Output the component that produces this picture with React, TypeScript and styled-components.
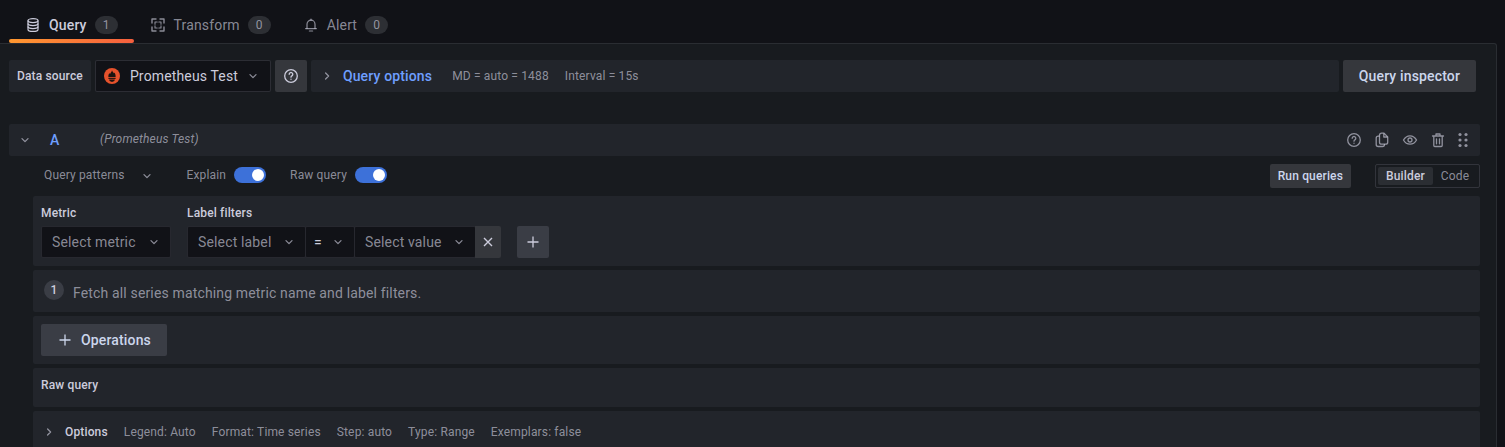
import styled, { createGlobalStyle } from 'styled-components';

const GlobalStyle = createGlobalStyle`
  html, body {
    margin: 0;
    padding: 0;
    height: 447px;
    overflow: hidden;
    background: #111217;
    font-family: Roboto, "Liberation Sans", sans-serif;
    letter-spacing: 0.15px;
    color: #ccccdc;
  }
  * {
    box-sizing: border-box;
  }
`;

const Chevron = ({ dir = 'down', size = 12 }: { dir?: 'down' | 'right'; size?: number }) => (
  <svg width={size} height={size} viewBox="0 0 12 12" fill="none" stroke="currentColor" strokeWidth="1.3" strokeLinecap="round" strokeLinejoin="round">
    {dir === 'down' ? <path d="M3 4.6 6 7.6 9 4.6" /> : <path d="M4.6 3 7.6 6 4.6 9" />}
  </svg>
);

const HelpIcon = () => (
  <svg width="16" height="16" viewBox="0 0 16 16" fill="none" stroke="currentColor" strokeWidth="1.3" strokeLinecap="round">
    <circle cx="8" cy="8" r="6.3" />
    <path d="M6.2 6.3a1.8 1.8 0 1 1 2.7 1.6c-.6.35-.9.7-.9 1.3" />
    <path d="M8 11.2v.1" />
  </svg>
);

const DatabaseIcon = () => (
  <svg width="16" height="16" viewBox="0 0 16 16" fill="none" stroke="currentColor" strokeWidth="1.2">
    <ellipse cx="8" cy="3.6" rx="5" ry="2" />
    <path d="M3 3.6v8.8c0 1.1 2.2 2 5 2s5-.9 5-2V3.6" />
    <path d="M3 6.6c0 1.1 2.2 2 5 2s5-.9 5-2M3 9.6c0 1.1 2.2 2 5 2s5-.9 5-2" />
  </svg>
);

const TransformIcon = () => (
  <svg width="16" height="16" viewBox="0 0 16 16" fill="none" stroke="currentColor" strokeWidth="1.4" strokeLinecap="round" strokeLinejoin="round">
    <path d="M2 6V2h4M10 2h4v4M14 10v4h-4M6 14H2v-4" />
    <path d="M5 7.200V5h2.200M8.800 5H11v2.200M11 8.800V11H8.800M7.200 11H5V8.800" strokeWidth="1.100" />
  </svg>
);

const BellIcon = () => (
  <svg width="16" height="16" viewBox="0 0 16 16" fill="none" stroke="currentColor" strokeWidth="1.2" strokeLinecap="round" strokeLinejoin="round">
    <path d="M4 11.400V7.200a4 4 0 0 1 8 0v4.200" />
    <path d="M2.600 11.600h10.800M6.400 14h3.200M8 2v1.200" />
  </svg>
);

const PrometheusLogo = () => (
  <svg width="16" height="16" viewBox="0 0 16 16">
    <circle cx="8" cy="8" r="8" fill="#e6522c" />
    <path d="M8 2.200c.3 1.500 1.600 2 2 3.200.2-.3.300-.6.300-1 1 1 1.500 2.500 1.300 4.600H4.400c-.2-1.800.4-3 1.300-3.900 0 .4.100.8.300 1.100C6.300 4.700 7.800 3.900 8 2.200Z" fill="#1a1410" />
    <path d="M4.400 9.800h7.200v1.100H4.400z" fill="#1a1410" />
    <path d="M5.200 11.600h5.600c0 1.300-1.200 2.300-2.800 2.300s-2.800-1-2.800-2.300Z" fill="#1a1410" />
  </svg>
);

const CopyIcon = () => (
  <svg width="16" height="16" viewBox="0 0 16 16" fill="none" stroke="currentColor" strokeWidth="1.3" strokeLinejoin="round">
    <path d="M5.500 3.200a2 2 0 0 1 2-2H10l3.700 3.700v5.300a2 2 0 0 1-2 2H7.500a2 2 0 0 1-2-2Z" />
    <path d="M9.800 1.400v3.600h3.700" />
    <path d="M5.500 4.200H4.200a2 2 0 0 0-2 2v6.300a2 2 0 0 0 2 2h4.300a2 2 0 0 0 2-2V12" />
  </svg>
);

const EyeIcon = () => (
  <svg width="16" height="16" viewBox="0 0 16 16" fill="none" stroke="currentColor" strokeWidth="1.3">
    <path d="M1.500 8C3 5.300 5.300 3.800 8 3.800S13 5.300 14.500 8C13 10.700 10.700 12.200 8 12.200S3 10.700 1.500 8Z" />
    <circle cx="8" cy="8" r="2" />
  </svg>
);

const TrashIcon = () => (
  <svg width="16" height="16" viewBox="0 0 16 16" fill="none" stroke="currentColor" strokeWidth="1.3" strokeLinecap="round" strokeLinejoin="round">
    <path d="M2.500 4h11M6 4V2h4v2M3.800 4v9.500a1 1 0 0 0 1 1h6.400a1 1 0 0 0 1-1V4M6.500 6.800v5M9.500 6.800v5" />
  </svg>
);

const DragIcon = () => (
  <svg width="16" height="16" viewBox="0 0 16 16" fill="currentColor">
    {[5, 11].map((x) => [2.500, 8, 13.500].map((y) => <circle key={`${x}-${y}`} cx={x} cy={y} r="1.600" />))}
  </svg>
);

const PlusIcon = ({ size = 16 }: { size?: number }) => (
  <svg width={size} height={size} viewBox="0 0 16 16" fill="none" stroke="currentColor" strokeWidth="1.300">
    <path d="M8 2.500v11M2.500 8h11" />
  </svg>
);

const CloseIcon = () => (
  <svg width="14" height="14" viewBox="0 0 14 14" fill="none" stroke="currentColor" strokeWidth="1.400">
    <path d="M3 3l8 8M11 3l-8 8" />
  </svg>
);

const Page = styled.div`
  height: 447px;
  overflow: hidden;
`;

const TabBar = styled.div`
  display: flex;
  height: 43px;
  padding-left: 9px;
`;

const Tab = styled.div<{ $active?: boolean }>`
  display: flex;
  align-items: center;
  gap: 8px;
  height: 43px;
  padding: 7px 16px 0;
  font-size: 14px;
  font-weight: ${(p) => (p.$active ? 500 : 400)};
  color: ${(p) => (p.$active ? '#ccccdc' : 'rgba(204, 204, 220, 0.65)')};
  position: relative;
  ${(p) =>
    p.$active &&
    `&::after {
      content: '';
      position: absolute;
      left: 0;
      right: 0;
      bottom: 0;
      height: 4px;
      border-radius: 2px;
      background: linear-gradient(90deg, #ff9830, #f55f3e);
    }`}
`;

const TabIcon = styled.span`
  display: flex;
`;

const Counter = styled.span`
  display: inline-flex;
  align-items: center;
  justify-content: center;
  width: 23px;
  height: 18px;
  border-radius: 9px;
  background: #2d2f34;
  font-size: 12px;
  font-weight: 400;
  color: rgba(204, 204, 220, 0.65);
`;

const Panel = styled.div`
  width: 1497px;
  height: 404px;
  background: #181b1f;
  border-top: 1px solid rgba(204, 204, 220, 0.1);
  border-right: 1px solid rgba(204, 204, 220, 0.1);
  border-top-right-radius: 3px;
  padding: 16px 0 0 9px;
`;

const SourceRow = styled.div`
  display: flex;
  gap: 4px;
  width: 1467px;
  height: 32px;
`;

const FieldLabel = styled.div`
  display: flex;
  align-items: center;
  padding: 0 8px;
  background: #22252b;
  border-radius: 2px;
  font-size: 12px;
  font-weight: 500;
  color: #ccccdc;
`;

const SourceSelect = styled.div`
  display: flex;
  align-items: center;
  width: 176px;
  padding: 0 8px;
  background: #111217;
  border: 1px solid rgba(204, 204, 220, 0.15);
  border-radius: 2px;
  font-size: 14px;
  color: #ccccdc;
  svg:last-child {
    margin-left: 9px;
    color: rgba(204, 204, 220, 0.65);
  }
`;

const SourceName = styled.span`
  margin-left: 10px;
`;

const SquareButton = styled.div`
  display: flex;
  align-items: center;
  justify-content: center;
  width: 32px;
  background: #35373c;
  border-radius: 2px;
  color: #ccccdc;
`;

const OptionsBar = styled.div`
  flex: 1;
  display: flex;
  align-items: center;
  padding-left: 10px;
  background: #22252b;
  border-radius: 2px;
  color: rgba(204, 204, 220, 0.65);
`;

const OptionsTitle = styled.span`
  margin-left: 10px;
  font-size: 14px;
  font-weight: 500;
  color: #6e9fff;
`;

const OptionsInfo = styled.span`
  margin-left: 20px;
  font-size: 12px;
  color: rgba(204, 204, 220, 0.65);
  & + & {
    margin-left: 16px;
  }
`;

const InspectorButton = styled.div`
  display: flex;
  align-items: center;
  padding: 0 16px;
  background: #35373c;
  border-radius: 2px;
  font-size: 14px;
  font-weight: 500;
  color: #ccd6ec;
`;

const QueryHeader = styled.div`
  display: flex;
  align-items: center;
  width: 1471px;
  height: 32px;
  margin-top: 32px;
  padding: 0 9px 0 10px;
  background: #22252b;
  border-radius: 2px;
  color: rgba(204, 204, 220, 0.65);
`;

const QueryLetter = styled.span`
  width: 50px;
  margin-left: 19px;
  font-size: 14px;
  font-weight: 500;
  color: #6e9fff;
`;

const QuerySource = styled.span`
  flex: 1;
  padding-bottom: 2px;
  font-size: 12px;
  font-style: italic;
  color: rgba(204, 204, 220, 0.65);
`;

const HeaderIcons = styled.div`
  display: flex;
  gap: 12px;
`;

const DragHandle = styled.span`
  display: flex;
  margin-left: -3px;
`;

const Body = styled.div`
  width: 1447px;
  margin-left: 24px;
`;

const Toolbar = styled.div`
  display: flex;
  align-items: center;
  height: 40px;
  padding-left: 11px;
  font-size: 12px;
  color: rgba(204, 204, 220, 0.65);
`;

const ToolbarGroup = styled.div`
  display: flex;
  align-items: center;
  padding-bottom: 3px;
`;

const ToolbarChevron = styled.span`
  display: flex;
  margin: 3px 34px 0 16px;
`;

const SwitchLabel = styled.span`
  margin-right: 8px;
`;

const Switch = styled.span`
  display: inline-flex;
  justify-content: flex-end;
  align-items: center;
  width: 32px;
  height: 16px;
  margin-right: 24px;
  padding-right: 2px;
  border-radius: 8px;
  background: #3d71d9;
  &::after {
    content: '';
    width: 12px;
    height: 12px;
    border-radius: 50%;
    background: #fff;
  }
`;

const ToolbarSpacer = styled.div`
  flex: 1;
`;

const RunButton = styled.div`
  display: flex;
  align-items: center;
  height: 24px;
  padding: 0 8px;
  background: #35373c;
  border-radius: 2px;
  font-size: 12px;
  font-weight: 500;
  color: #ccd6ec;
`;

const ModeSwitch = styled.div`
  display: flex;
  align-items: center;
  width: 105px;
  height: 24px;
  margin-left: 24px;
  padding: 2px;
  border: 1px solid rgba(204, 204, 220, 0.15);
  border-radius: 2px;
`;

const ModeItem = styled.span<{ $active?: boolean }>`
  display: flex;
  align-items: center;
  height: 100%;
  padding: 0 8px;
  border-radius: 2px;
  font-size: 12px;
  font-weight: ${(p) => (p.$active ? 500 : 400)};
  background: ${(p) => (p.$active ? '#2b2e33' : 'transparent')};
  color: ${(p) => (p.$active ? '#ccccdc' : 'rgba(204, 204, 220, 0.65)')};
`;

const Sections = styled.div`
  display: flex;
  flex-direction: column;
  gap: 4px;
`;

const Section = styled.div<{ $height: number }>`
  height: ${(p) => p.$height}px;
  padding: 8px;
  background: #22252b;
  border-radius: 2px;
`;

const Filters = styled.div`
  display: flex;
  gap: 17px;
`;

const FilterColumn = styled.div`
  display: flex;
  flex-direction: column;
`;

const FilterTitle = styled.div`
  height: 22px;
  padding-top: 1px;
  font-size: 12px;
  font-weight: 500;
  line-height: 17px;
  color: #ccccdc;
`;

const SelectGroup = styled.div`
  display: flex;
`;

const SelectBox = styled.div<{ $width: number }>`
  display: flex;
  align-items: center;
  justify-content: space-between;
  width: ${(p) => p.$width}px;
  height: 32px;
  margin-right: -1px;
  padding: 0 10px 0 10px;
  background: #111217;
  border: 1px solid rgba(204, 204, 220, 0.12);
  border-radius: 2px;
  font-size: 14px;
  color: rgba(204, 204, 220, 0.65);
`;

const OperatorText = styled.span`
  margin-left: -2px;
  color: #ccccdc;
  font-size: 14px;
`;

const RemoveButton = styled.div`
  display: flex;
  align-items: center;
  justify-content: center;
  width: 26px;
  height: 32px;
  background: #35373c;
  border-radius: 0 2px 2px 0;
  color: #ccccdc;
`;

const AddButton = styled(SquareButton)`
  height: 32px;
  margin-left: 16px;
  background: #3a3d45;
`;

const StepRow = styled.div`
  display: flex;
  align-items: center;
  height: 30px;
  margin-left: 3px;
  font-size: 14px;
  color: rgba(204, 204, 220, 0.65);
`;

const StepBadge = styled.span`
  display: inline-flex;
  align-items: center;
  justify-content: center;
  width: 20px;
  height: 20px;
  margin: -6px 9px 0 0;
  border-radius: 50%;
  background: #3a3d45;
  font-size: 12px;
  font-weight: 500;
  color: #ccccdc;
`;

const OperationsButton = styled.div`
  display: inline-flex;
  align-items: center;
  height: 32px;
  padding: 0 16px;
  gap: 8px;
  background: #3a3d45;
  border-radius: 2px;
  font-size: 14px;
  font-weight: 500;
  color: #ccd6ec;
`;

const RawTitle = styled.div`
  padding-top: 1px;
  font-size: 12px;
  font-weight: 500;
  line-height: 17px;
  color: #ccccdc;
`;

const OptionsRow = styled.div`
  display: flex;
  align-items: center;
  height: 26px;
  margin-left: 2px;
  font-size: 12px;
  color: rgba(204, 204, 220, 0.65);
`;

const OptionsLabel = styled.span`
  margin: 0 16px 0 10px;
  font-weight: 500;
  color: #ccccdc;
`;

const OptionItem = styled.span`
  margin-right: 16px;
`;

export default function App() {
  return (
    <Page>
      <GlobalStyle />
      <TabBar>
        <Tab $active>
          <TabIcon><DatabaseIcon /></TabIcon>
          Query
          <Counter>1</Counter>
        </Tab>
        <Tab>
          <TabIcon><TransformIcon /></TabIcon>
          Transform
          <Counter>0</Counter>
        </Tab>
        <Tab>
          <TabIcon><BellIcon /></TabIcon>
          Alert
          <Counter>0</Counter>
        </Tab>
      </TabBar>
      <Panel>
        <SourceRow>
          <FieldLabel>Data source</FieldLabel>
          <SourceSelect>
            <PrometheusLogo />
            <SourceName>Prometheus Test</SourceName>
            <Chevron />
          </SourceSelect>
          <SquareButton><HelpIcon /></SquareButton>
          <OptionsBar>
            <Chevron dir="right" />
            <OptionsTitle>Query options</OptionsTitle>
            <OptionsInfo>MD = auto = 1488</OptionsInfo>
            <OptionsInfo>Interval = 15s</OptionsInfo>
          </OptionsBar>
          <InspectorButton>Query inspector</InspectorButton>
        </SourceRow>
        <QueryHeader>
          <Chevron />
          <QueryLetter>A</QueryLetter>
          <QuerySource>(Prometheus Test)</QuerySource>
          <HeaderIcons>
            <HelpIcon />
            <CopyIcon />
            <EyeIcon />
            <TrashIcon />
            <DragHandle><DragIcon /></DragHandle>
          </HeaderIcons>
        </QueryHeader>
        <Body>
          <Toolbar>
            <ToolbarGroup>
              Query patterns
              <ToolbarChevron><Chevron /></ToolbarChevron>
              <SwitchLabel>Explain</SwitchLabel>
              <Switch />
              <SwitchLabel>Raw query</SwitchLabel>
              <Switch />
            </ToolbarGroup>
            <ToolbarSpacer />
            <RunButton>Run queries</RunButton>
            <ModeSwitch>
              <ModeItem $active>Builder</ModeItem>
              <ModeItem>Code</ModeItem>
            </ModeSwitch>
          </Toolbar>
          <Sections>
            <Section $height={70}>
              <Filters>
                <FilterColumn>
                  <FilterTitle>Metric</FilterTitle>
                  <SelectGroup>
                    <SelectBox $width={130}>Select metric<Chevron /></SelectBox>
                  </SelectGroup>
                </FilterColumn>
                <FilterColumn>
                  <FilterTitle>Label filters</FilterTitle>
                  <SelectGroup>
                    <SelectBox $width={119}>Select label<Chevron /></SelectBox>
                    <SelectBox $width={50}><OperatorText>=</OperatorText><Chevron /></SelectBox>
                    <SelectBox $width={122}>Select value<Chevron /></SelectBox>
                    <RemoveButton><CloseIcon /></RemoveButton>
                    <AddButton><PlusIcon /></AddButton>
                  </SelectGroup>
                </FilterColumn>
              </Filters>
            </Section>
            <Section $height={42}>
              <StepRow>
                <StepBadge>1</StepBadge>
                Fetch all series matching metric name and label filters.
              </StepRow>
            </Section>
            <Section $height={48}>
              <OperationsButton>
                <PlusIcon />
                Operations
              </OperationsButton>
            </Section>
            <Section $height={39}>
              <RawTitle>Raw query</RawTitle>
            </Section>
            <Section $height={40}>
              <OptionsRow>
                <Chevron dir="right" />
                <OptionsLabel>Options</OptionsLabel>
                <OptionItem>Legend: Auto</OptionItem>
                <OptionItem>Format: Time series</OptionItem>
                <OptionItem>Step: auto</OptionItem>
                <OptionItem>Type: Range</OptionItem>
                <OptionItem>Exemplars: false</OptionItem>
              </OptionsRow>
            </Section>
          </Sections>
        </Body>
      </Panel>
    </Page>
  );
}
